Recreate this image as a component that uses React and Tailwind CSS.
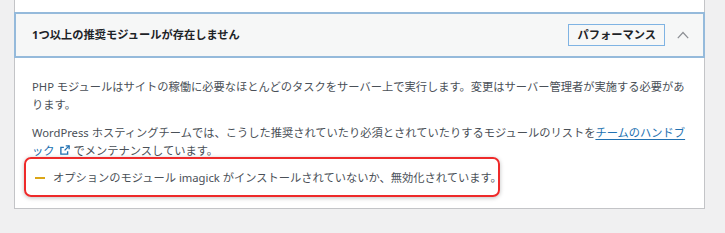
import React from 'react';

const ExternalIcon = () => (
  <svg viewBox="0 0 16 16" className="inline-block w-[12px] h-[12px] ml-[4px] mr-[3px] align-[-1px] text-[#2271b1]" fill="none" stroke="currentColor" strokeWidth="1.8">
    <path d="M9 2.5h4.5V7" />
    <path d="M13.5 2.5L7.5 8.5" />
    <path d="M11.5 9.5v4h-9v-9h4" />
  </svg>
);

const App = () => {
  return (
    <div
      className="w-full h-[233px] bg-[#f0f0f1] pl-[14px] pr-[20px] overflow-hidden"
      style={{ fontFamily: '"Noto Sans", "Noto Sans CJK JP", sans-serif' }}
    >
      <div className="bg-white border-x border-b border-[#c3c4c7]">
        <div className="h-[12px]" />
        <div className="-mx-px h-[46px] border-2 border-[#95badb] bg-[#f6f7f7] flex items-center pl-[16px] pr-[14px]">
          <h3 className="flex-1 text-[11.25px] font-bold text-[#1d2327]">1つ以上の推奨モジュールが存在しません</h3>
          <span className="h-[22px] px-[8px] flex items-center border border-[#7fb3e3] text-[11.25px] font-bold text-[#1d2327]">
            パフォーマンス
          </span>
          <svg viewBox="0 0 12 8" className="w-[12px] h-[8px] ml-[12px] text-[#8c8f94]" fill="none" stroke="currentColor" strokeWidth="1.2">
            <path d="M0.8 7.2L6 1.5l5.2 5.7" />
          </svg>
        </div>
        <div className="pl-[17px] pr-[16px] pt-[20px] pb-[21px] text-[11.25px] leading-[18px] text-[#4a5057]">
          <p>
            PHP モジュールはサイトの稼働に必要なほとんどのタスクをサーバー上で実行します。変更はサーバー管理者が実施する必要があります。
          </p>
          <p className="mt-[10px]">
            WordPress ホスティングチームでは、こうした推奨されていたり必須とされていたりするモジュールのリストを
            <a href="#" className="text-[#2271b1] underline underline-offset-2">チームのハンドブック</a>
            <ExternalIcon />
            でメンテナンスしています。
          </p>
          <div className="relative mt-[9px]">
            <div className="absolute left-[-8px] top-[-12px] w-[476px] h-[40px] border-2 border-[#ee2a2a] rounded-[7px] shadow-[0_1px_4px_rgba(0,0,0,0.25)]" />
            <div className="flex items-center">
              <span className="w-[10px] h-[2px] bg-[#dba617] ml-[3px] mr-[8px]" />
              <span>オプションのモジュール imagick がインストールされていないか、無効化されています。</span>
            </div>
          </div>
        </div>
      </div>
    </div>
  );
};

export default App;
